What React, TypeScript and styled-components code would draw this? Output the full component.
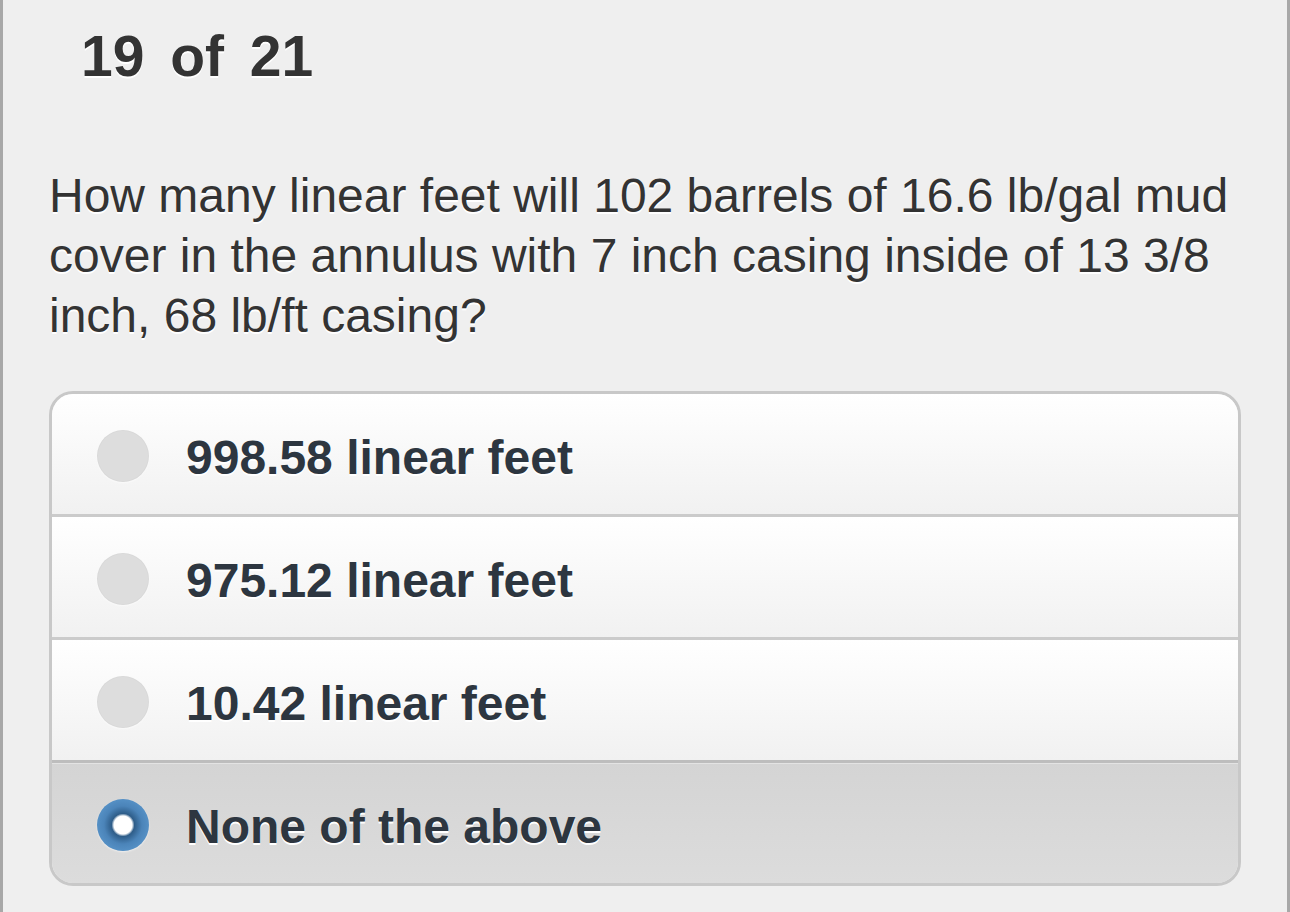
import React from "react";
import styled, { createGlobalStyle } from "styled-components";

const GlobalStyle = createGlobalStyle`
  html, body {
    margin: 0;
    padding: 0;
    background: #efefef;
  }
  body {
    font-family: "Liberation Sans", Arial, Helvetica, sans-serif;
  }
`;

const Page = styled.div`
  box-sizing: border-box;
  min-height: 912px;
  width: 1290px;
  background: #efefef;
  border-left: 3px solid #a8a8a8;
  border-right: 3px solid #a8a8a8;
  padding: 28px 46px 0 46px;
  overflow: hidden;
`;

const Counter = styled.div`
  font-size: 57px;
  line-height: 57px;
  font-weight: 700;
  color: #333;
  word-spacing: 10px;
  padding-left: 32px;
  text-shadow: 0 2px 0 #fff;
`;

const Question = styled.p`
  margin: 81px 0 0 0;
  font-size: 48px;
  line-height: 60px;
  color: #333;
  text-shadow: 0 2px 0 #fff;
`;

const ChoiceList = styled.div`
  box-sizing: border-box;
  margin-top: 45px;
  width: 1192px;
  border: 3px solid #c8c8c8;
  border-radius: 24px;
  overflow: hidden;
  display: flex;
  flex-direction: column;
`;

const Choice = styled.label<{ $checked?: boolean; $first?: boolean }>`
  height: 120px;
  display: flex;
  align-items: center;
  gap: 37px;
  padding-left: 45px;
  border-top: ${(p) => (p.$first ? "none" : `3px solid ${p.$checked ? "#bdbdbd" : "#cbcbcb"}`)};
  background: ${(p) =>
    p.$checked
      ? "linear-gradient(#d4d4d4, #dcdcdc)"
      : "linear-gradient(#ffffff, #f1f1f1)"};
  box-shadow: ${(p) => (p.$checked ? "inset 0 1px 0 rgba(255,255,255,0.35)" : "none")};
  cursor: pointer;
`;

const Radio = styled.span<{ $checked?: boolean }>`
  flex: none;
  width: 52px;
  height: 52px;
  border-radius: 50%;
  margin-top: 3px;
  box-sizing: border-box;
  background: ${(p) =>
    p.$checked
      ? "radial-gradient(circle, #ffffff 0 9px, #2e5d89 11.5px, #4b84b9 19px, #5590c5 26px)"
      : "#dddddd"};
  box-shadow: ${(p) =>
    p.$checked
      ? "0 1px 2px rgba(255,255,255,0.6)"
      : "inset 0 0 0 1px rgba(0,0,0,0.02), 0 1px 2px rgba(255,255,255,0.6)"};
`;

const ChoiceText = styled.span`
  font-size: 48px;
  font-weight: 700;
  color: #2d3640;
  padding-top: 7px;
  text-shadow: 0 2px 0 #fff;
`;

const choices = [
  "998.58 linear feet",
  "975.12 linear feet",
  "10.42 linear feet",
  "None of the above",
];

export default function App() {
  const selected = 3;
  return (
    <>
      <GlobalStyle />
      <Page>
        <Counter>19 of 21</Counter>
        <Question>
          How many linear feet will 102 barrels of 16.6 lb/gal mud cover in the annulus with 7
          inch casing inside of 13 3/8 inch, 68 lb/ft casing?
        </Question>
        <ChoiceList>
          {choices.map((c, i) => (
            <Choice key={c} $checked={i === selected} $first={i === 0}>
              <Radio $checked={i === selected} />
              <ChoiceText>{c}</ChoiceText>
            </Choice>
          ))}
        </ChoiceList>
      </Page>
    </>
  );
}
